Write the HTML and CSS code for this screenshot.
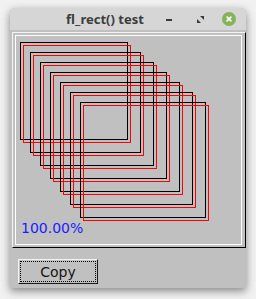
FILE: index.html
```html
<!DOCTYPE html>
<html>
<head>
<meta charset="utf-8">
<link rel="stylesheet" href="styles.css">
</head>
<body>
<div class="window">
  <div class="titlebar">
    <div class="title">fl_rect() test</div>
    <div class="ctl-min"></div>
    <svg class="ctl-max" width="7" height="7" viewBox="0 0 7 7"><path d="M3 0H7V4Z M0 3V7H4Z" fill="#3a3a3a"/></svg>
    <svg class="ctl-close" width="14" height="14" viewBox="0 0 14 14"><circle cx="7" cy="7" r="7" fill="#84b35a"/><path d="M4.6 4.6L9.4 9.4M9.4 4.6L4.6 9.4" stroke="#fff" stroke-width="1.6"/></svg>
  </div>
  <div class="content">
    <div class="frame">
      <div class="inner">
        <svg class="canvas" width="225" height="208" viewBox="16 36 225 208">
          <g fill="none" stroke-width="1" shape-rendering="crispEdges">
            <rect x="20.5" y="42.5" width="107" height="97" stroke="#000"/>
            <rect x="23.5" y="45.5" width="107" height="97" stroke="#f00"/>
            <rect x="30.5" y="52.5" width="110" height="100" stroke="#000"/>
            <rect x="33.5" y="55.5" width="110" height="100" stroke="#f00"/>
            <rect x="40.5" y="62.5" width="113" height="103" stroke="#000"/>
            <rect x="43.5" y="65.5" width="113" height="103" stroke="#f00"/>
            <rect x="50.5" y="72.5" width="116" height="106" stroke="#000"/>
            <rect x="53.5" y="75.5" width="116" height="106" stroke="#f00"/>
            <rect x="60.5" y="82.5" width="119" height="109" stroke="#000"/>
            <rect x="63.5" y="85.5" width="119" height="109" stroke="#f00"/>
            <rect x="70.5" y="92.5" width="122" height="112" stroke="#000"/>
            <rect x="73.5" y="95.5" width="122" height="112" stroke="#f00"/>
            <rect x="80.5" y="102.5" width="125" height="115" stroke="#000"/>
            <rect x="83.5" y="105.5" width="125" height="115" stroke="#f00"/>
          </g>
          <text class="pct" x="21" y="233">100.00%</text>
        </svg>
      </div>
    </div>
    <div class="btnrow">
      <button class="btn"><span class="focus">Copy</span></button>
    </div>
  </div>
</div>
</body>
</html>
```

FILE: styles.css
```css
html, body {
  margin: 0;
  padding: 0;
}
body {
  width: 256px;
  height: 299px;
  background: #f1f1f1;
  overflow: hidden;
}
.window {
  margin: 8px 0 0 10px;
  width: 236px;
  height: 280px;
  border-radius: 5px 5px 0 0;
  box-shadow: 0 3px 9px rgba(0, 0, 0, 0.45);
  background: #c0c0c0;
  display: flex;
  flex-direction: column;
}
.titlebar {
  height: 22px;
  background: #d6d6d6;
  border-radius: 5px 5px 0 0;
  display: flex;
  align-items: center;
  font-family: "Noto Sans", "DejaVu Sans", sans-serif;
}
.title {
  margin-left: 55px;
  width: 80px;
  text-align: center;
  font-size: 13px;
  font-weight: bold;
  color: #3c3c3c;
  white-space: nowrap;
}
.ctl-min {
  margin-left: 21px;
  width: 6px;
  height: 2px;
  background: #3a3a3a;
  margin-top: 1px;
}
.ctl-max {
  margin-left: 25px;
  display: block;
}
.ctl-close {
  margin-left: 18px;
  display: block;
}
.content {
  display: flex;
  flex-direction: column;
  padding-top: 2px;
}
.frame {
  margin-left: 2px;
  width: 232px;
  height: 214px;
  border: 1px solid;
  border-color: #f4f4f4 #000 #000 #f4f4f4;
  padding: 2px 3px 2px 2px;
  box-sizing: content-box;
  width: 227px;
  height: 210px;
}
.inner {
  width: 225px;
  height: 208px;
  border: 1px solid #fff;
}
.canvas {
  display: block;
}
.pct {
  font-family: "DejaVu Sans", sans-serif;
  font-size: 14px;
  fill: #1c1cff;
}
.btnrow {
  display: flex;
  padding: 11px 0 0 8px;
}
.btn {
  width: 80px;
  height: 25px;
  margin: 0;
  padding: 1px;
  background: #c0c0c0;
  border: 1px solid;
  border-color: #f4f4f4 #1a1a1a #1a1a1a #f4f4f4;
  box-sizing: border-box;
  font-family: "DejaVu Sans", sans-serif;
  font-size: 14px;
  color: #141414;
  display: flex;
}
.focus {
  flex: 1;
  border: 1px dotted #000;
  display: flex;
  align-items: center;
  justify-content: center;
  line-height: 1;
}
```
